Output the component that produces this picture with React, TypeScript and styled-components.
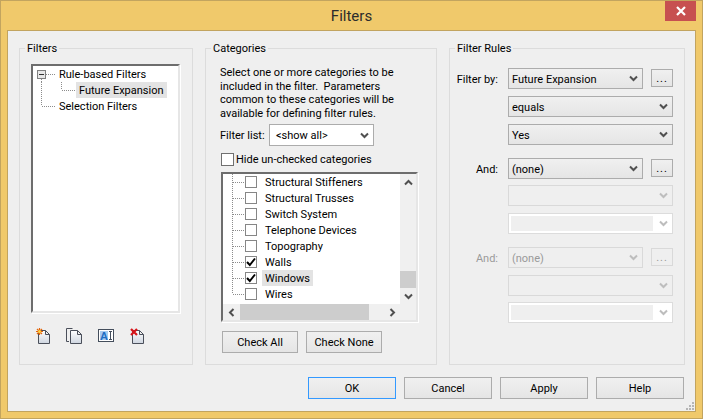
import styled, { createGlobalStyle } from 'styled-components';

const FONT = 'Roboto, "Noto Sans", sans-serif';

const GlobalStyle = createGlobalStyle`
  html, body {
    margin: 0;
    width: 703px;
    height: 419px;
    overflow: hidden;
    background: #f0c96b;
  }
  * { box-sizing: border-box; }
`;

const Window = styled.div`
  width: 703px;
  height: 419px;
  background: #f0c96b;
  border: 1px solid #c2a45f;
  padding: 0 6px 6px;
  display: flex;
  flex-direction: column;
  font-family: ${FONT};
  font-size: 11px;
  color: #000;
`;

const TitleBar = styled.div`
  position: relative;
  height: 29px;
  flex: none;
  display: flex;
  align-items: center;
  justify-content: center;
  font-size: 15px;
  color: #2c2c2c;
`;

const CloseButton = styled.div`
  position: absolute;
  top: 0;
  right: 0;
  width: 31px;
  height: 20px;
  background: #c75050;
  display: flex;
  align-items: center;
  justify-content: center;
`;

const Client = styled.div`
  position: relative;
  flex: 1;
  background: #efefef;
  border: 1px solid #c2a45f;
  padding: 10px 11px 0;
`;

const Groups = styled.div`
  display: grid;
  grid-template-columns: 174px 232px 236px;
  column-gap: 12px;
  height: 324px;
`;

const Group = styled.fieldset`
  margin: 0;
  min-width: 0;
  height: 324px;
  border: 1px solid #dcdcdc;
  padding: 0;
`;

const GroupTitle = styled.legend`
  margin-left: 5px;
  padding: 0 2px;
  height: 14px;
  line-height: 16px;
`;

const FiltersBody = styled.div`
  padding: 9px 0 0 11px;
`;

const TreeBox = styled.div`
  width: 149px;
  height: 249px;
  background: #fff;
  border-style: solid;
  border-width: 2px;
  border-color: #6d6d6d #e6e6e6 #e6e6e6 #6d6d6d;
  box-shadow: 1px 1px 0 #fff;
  padding: 0;
`;

const TreeRow = styled.div`
  height: 16px;
  display: flex;
  align-items: center;
  white-space: nowrap;
`;

const TreeLabel = styled.span<{ $selected?: boolean }>`
  height: 16px;
  line-height: 18px;
  padding: 0 3px;
  background: ${({ $selected }) => ($selected ? '#e3e3e3' : 'transparent')};
`;

const IconBar = styled.div`
  display: flex;
  align-items: center;
  gap: 16px;
  margin: 15px 0 0 5px;
`;

const CategoriesBody = styled.div`
  padding: 11px 0 0 14px;
`;

const Description = styled.div`
  line-height: 13.5px;
  white-space: nowrap;
`;

const FilterListRow = styled.div`
  display: flex;
  align-items: center;
  margin-top: 4px;
  white-space: nowrap;
`;

const FilterListLabel = styled.span`
  width: 49px;
  flex: none;
`;

const ListDropdown = styled.div`
  width: 105px;
  height: 22px;
  background: #fff;
  border: 1px solid #acacac;
  display: flex;
  align-items: center;
  justify-content: space-between;
  padding: 0 4px 0 6px;
`;

const HideRow = styled.div`
  display: flex;
  align-items: center;
  gap: 2px;
  margin: 7px 0 0 1px;
  height: 13px;
  white-space: nowrap;
`;

const CheckBox = styled.div<{ $size: number }>`
  width: ${({ $size }) => $size}px;
  height: ${({ $size }) => $size}px;
  flex: none;
  background: #fff;
  border: 1px solid ${({ $size }) => ($size > 12 ? '#707070' : '#868686')};
  display: flex;
  align-items: center;
  justify-content: center;
`;

const ListBox = styled.div`
  width: 197px;
  height: 150px;
  margin: 6px 0 0 1px;
  background: #fff;
  border-style: solid;
  border-width: 2px;
  border-color: #6d6d6d #e6e6e6 #e6e6e6 #6d6d6d;
  box-shadow: 1px 1px 0 #fff;
  display: grid;
  grid-template-columns: 1fr 16px;
  grid-template-rows: 130px 16px;
`;

const ListRows = styled.div`
  overflow: hidden;
`;

const ListRow = styled.div`
  height: 16px;
  display: flex;
  align-items: center;
  white-space: nowrap;
`;

const ListLabel = styled(TreeLabel)`
  margin-left: 5px;
`;

const VScroll = styled.div`
  background: #f0f0f0;
  display: flex;
  flex-direction: column;
`;

const HScroll = styled.div`
  background: #f0f0f0;
  display: flex;
`;

const Corner = styled.div`
  background: #f0f0f0;
`;

const ScrollArrow = styled.div`
  width: 16px;
  height: 16px;
  flex: none;
  display: flex;
  align-items: center;
  justify-content: center;
`;

const VTrack = styled.div`
  flex: 1;
  display: flex;
  align-items: flex-end;
`;

const VThumb = styled.div`
  width: 16px;
  height: 17px;
  background: #cdcdcd;
`;

const HTrack = styled.div`
  flex: 1;
`;

const HThumb = styled.div`
  width: 129px;
  height: 16px;
  margin-left: 1px;
  background: #cdcdcd;
`;

const CheckButtons = styled.div`
  display: flex;
  gap: 8px;
  margin: 9px 0 0 2px;
`;

const PushButton = styled.div<{ $width: number; $isDefault?: boolean }>`
  width: ${({ $width }) => $width}px;
  height: 22px;
  display: flex;
  align-items: center;
  justify-content: center;
  background: linear-gradient(#f0f0f0, #e5e5e5);
  border: 1px solid ${({ $isDefault }) => ($isDefault ? '#3399ff' : '#acacac')};
  white-space: nowrap;
`;

const RulesBody = styled.div`
  display: flex;
  flex-direction: column;
`;

const RuleRow = styled.div<{ $gap: number }>`
  display: flex;
  align-items: flex-start;
  height: 21px;
  margin-top: ${({ $gap }) => $gap}px;
`;

const RuleLabel = styled.div<{ $disabled?: boolean }>`
  width: 48px;
  margin-right: 10px;
  flex: none;
  height: 21px;
  line-height: 23px;
  text-align: right;
  white-space: nowrap;
  color: ${({ $disabled }) => ($disabled ? '#9a9a9a' : 'inherit')};
`;

const Combo = styled.div<{ $width: number; $disabled?: boolean }>`
  width: ${({ $width }) => $width}px;
  height: 21px;
  flex: none;
  display: flex;
  align-items: center;
  justify-content: space-between;
  padding: 2px 4px 0 3px;
  border: 1px solid ${({ $disabled }) => ($disabled ? '#d9d9d9' : '#acacac')};
  background: ${({ $disabled }) => ($disabled ? '#efefef' : 'linear-gradient(#f0f0f0, #e5e5e5)')};
  color: ${({ $disabled }) => ($disabled ? '#9a9a9a' : 'inherit')};
  white-space: nowrap;

  svg {
    margin-top: -2px;
  }
`;

const EditCombo = styled.div`
  width: 165px;
  height: 21px;
  flex: none;
  background: #fff;
  border: 1px solid #dcdcdc;
  padding: 2px 4px 2px 2px;
  display: flex;
  align-items: center;
  justify-content: space-between;
`;

const EditField = styled.div`
  width: 142px;
  height: 15px;
  background: #efefef;
`;

const MoreButton = styled.div<{ $disabled?: boolean }>`
  width: 22px;
  height: 18px;
  flex: none;
  margin: 1px 0 0 8px;
  display: flex;
  align-items: center;
  justify-content: center;
  letter-spacing: 1px;
  background: ${({ $disabled }) => ($disabled ? '#efefef' : 'linear-gradient(#f0f0f0, #e5e5e5)')};
  border: 1px solid ${({ $disabled }) => ($disabled ? '#d9d9d9' : '#acacac')};
  color: ${({ $disabled }) => ($disabled ? '#9a9a9a' : 'inherit')};
`;

const Footer = styled.div`
  display: flex;
  justify-content: flex-end;
  gap: 8px;
  margin-top: 12px;
`;

const SizeGrip = styled.svg`
  position: absolute;
  right: 0;
  bottom: 0;
`;

const TreeLines = styled.svg`
  flex: none;
`;

const Chevron = ({ color = '#505050', dir = 'down' }: { color?: string; dir?: 'down' | 'up' | 'left' | 'right' }) => {
  const rotate = { down: 0, up: 180, left: 90, right: -90 }[dir];
  return (
    <svg width="9" height="7" viewBox="0 0 9 7" style={{ transform: `rotate(${rotate}deg)`, flex: 'none' }}>
      <path d="M1 1.5 L4.5 5 L8 1.5" fill="none" stroke={color} strokeWidth="2" />
    </svg>
  );
};

const Connector = ({ last, width = 22, x = 9 }: { last?: boolean; width?: number; x?: number }) => (
  <TreeLines width={width} height="16" shapeRendering="crispEdges">
    <path
      d={`M${x + 0.5} 0 V${last ? 8 : 16} M${x + 0.5} 8.5 H${width - 1}`}
      fill="none"
      stroke="#8c8c8c"
      strokeDasharray="1 1"
    />
  </TreeLines>
);

const Tick = () => (
  <svg width="10" height="10" viewBox="0 0 10 10">
    <path d="M1 5 L3.8 8 L9 1.5" fill="none" stroke="#000" strokeWidth="2" />
  </svg>
);

const PageShape = ({ x = 0, y = 0 }: { x?: number; y?: number }) => (
  <path
    transform={`translate(${x} ${y})`}
    d="M.5.5 H7.5 L11.5 4.5 V13.5 H.5 Z M7.5.5 V4.5 H11.5"
    fill="url(#pageFill)"
    stroke="#4a4f5a"
  />
);

const PageGradient = () => (
  <defs>
    <linearGradient id="pageFill" x1="0" y1="0" x2="0" y2="1">
      <stop offset="0" stopColor="#ffffff" />
      <stop offset="1" stopColor="#cfd6e0" />
    </linearGradient>
  </defs>
);

const NewIcon = () => (
  <svg width="14" height="16" viewBox="0 0 14 16">
    <PageGradient />
    <PageShape x={2} y={2} />
    <path d="M3.5 0 V7 M0 3.5 H7 M1 1 L6 6 M6 1 L1 6" stroke="#e2660c" strokeWidth="1.2" />
    <circle cx="3.5" cy="3.5" r="1.5" fill="#ffd23c" />
  </svg>
);

const CopyIcon = () => (
  <svg width="16" height="16" viewBox="0 0 16 16">
    <PageGradient />
    <path d="M6.5 .5 H.5 V13.5 H3" fill="none" stroke="#4a4f5a" />
    <PageShape x={4} y={2} />
  </svg>
);

const RenameIcon = () => (
  <svg width="16" height="14" viewBox="0 0 16 14">
    <rect x=".5" y=".5" width="15" height="12" fill="#fff" stroke="#444e5c" />
    <rect x="2" y="2" width="8" height="9" fill="#a9cdf0" />
    <text x="6" y="10.5" textAnchor="middle" fontSize="11" fontWeight="700" fontFamily="Liberation Sans, sans-serif" fill="#1f6fc4">
      A
    </text>
    <path d="M11 2.5 H14 M12.5 2.5 V10.5 M11 10.5 H14" stroke="#444e5c" fill="none" />
  </svg>
);

const DeleteIcon = () => (
  <svg width="14" height="16" viewBox="0 0 14 16">
    <PageGradient />
    <PageShape x={2} y={2} />
    <path d="M1 1 L7 7 M7 1 L1 7" stroke="#d6141a" strokeWidth="2.2" />
  </svg>
);

const categories = [
  { name: 'Structural Stiffeners' },
  { name: 'Structural Trusses' },
  { name: 'Switch System' },
  { name: 'Telephone Devices' },
  { name: 'Topography' },
  { name: 'Walls', checked: true },
  { name: 'Windows', checked: true, selected: true },
  { name: 'Wires', last: true },
];

export default function App() {
  return (
    <>
      <GlobalStyle />
      <Window>
        <TitleBar>
          Filters
          <CloseButton>
            <svg width="10" height="10" viewBox="0 0 10 10">
              <path d="M1 1 L9 9 M9 1 L1 9" stroke="#fff" strokeWidth="2.2" />
            </svg>
          </CloseButton>
        </TitleBar>
        <Client>
          <Groups>
            <Group>
              <GroupTitle>Filters</GroupTitle>
              <FiltersBody>
                <TreeBox>
                  <TreeRow>
                    <TreeLines width="23" height="16" shapeRendering="crispEdges">
                      <path d="M8.5 13 V16 M13 8.5 H23" fill="none" stroke="#8c8c8c" strokeDasharray="1 1" />
                      <rect x="4.5" y="4.5" width="8" height="8" fill="#e8e8e8" stroke="#808080" />
                      <path d="M6 8.5 H11" stroke="#333" />
                    </TreeLines>
                    <TreeLabel>Rule-based Filters</TreeLabel>
                  </TreeRow>
                  <TreeRow>
                    <TreeLines width="43" height="16" shapeRendering="crispEdges">
                      <path d="M8.5 0 V16 M28.5 0 V8 M28.5 8.5 H42" fill="none" stroke="#8c8c8c" strokeDasharray="1 1" />
                    </TreeLines>
                    <TreeLabel $selected>Future Expansion</TreeLabel>
                  </TreeRow>
                  <TreeRow>
                    <TreeLines width="23" height="16" shapeRendering="crispEdges">
                      <path d="M8.5 0 V8 M8.5 8.5 H23" fill="none" stroke="#8c8c8c" strokeDasharray="1 1" />
                    </TreeLines>
                    <TreeLabel>Selection Filters</TreeLabel>
                  </TreeRow>
                </TreeBox>
                <IconBar>
                  <NewIcon />
                  <CopyIcon />
                  <RenameIcon />
                  <DeleteIcon />
                </IconBar>
              </FiltersBody>
            </Group>

            <Group>
              <GroupTitle>Categories</GroupTitle>
              <CategoriesBody>
                <Description>
                  Select one or more categories to be
                  <br />
                  included in the filter.&nbsp; Parameters
                  <br />
                  common to these categories will be
                  <br />
                  available for defining filter rules.
                </Description>
                <FilterListRow>
                  <FilterListLabel>Filter list:</FilterListLabel>
                  <ListDropdown>
                    &lt;show all&gt;
                    <Chevron />
                  </ListDropdown>
                </FilterListRow>
                <HideRow>
                  <CheckBox $size={13} />
                  Hide un-checked categories
                </HideRow>
                <ListBox>
                  <ListRows>
                    {categories.map((c) => (
                      <ListRow key={c.name}>
                        <Connector last={c.last} />
                        <CheckBox $size={12}>{c.checked && <Tick />}</CheckBox>
                        <ListLabel $selected={c.selected}>{c.name}</ListLabel>
                      </ListRow>
                    ))}
                  </ListRows>
                  <VScroll>
                    <ScrollArrow>
                      <Chevron dir="up" />
                    </ScrollArrow>
                    <VTrack>
                      <VThumb />
                    </VTrack>
                    <ScrollArrow>
                      <Chevron />
                    </ScrollArrow>
                  </VScroll>
                  <HScroll>
                    <ScrollArrow>
                      <Chevron dir="left" />
                    </ScrollArrow>
                    <HTrack>
                      <HThumb />
                    </HTrack>
                    <ScrollArrow>
                      <Chevron dir="right" />
                    </ScrollArrow>
                  </HScroll>
                  <Corner />
                </ListBox>
                <CheckButtons>
                  <PushButton $width={76}>Check All</PushButton>
                  <PushButton $width={76}>Check None</PushButton>
                </CheckButtons>
              </CategoriesBody>
            </Group>

            <Group>
              <GroupTitle>Filter Rules</GroupTitle>
              <RulesBody>
                <RuleRow $gap={13}>
                  <RuleLabel>Filter by:</RuleLabel>
                  <Combo $width={135}>
                    Future Expansion
                    <Chevron />
                  </Combo>
                  <MoreButton>...</MoreButton>
                </RuleRow>
                <RuleRow $gap={7}>
                  <RuleLabel />
                  <Combo $width={165}>
                    equals
                    <Chevron />
                  </Combo>
                </RuleRow>
                <RuleRow $gap={7}>
                  <RuleLabel />
                  <Combo $width={165}>
                    Yes
                    <Chevron />
                  </Combo>
                </RuleRow>
                <RuleRow $gap={13}>
                  <RuleLabel>And:</RuleLabel>
                  <Combo $width={135}>
                    (none)
                    <Chevron />
                  </Combo>
                  <MoreButton>...</MoreButton>
                </RuleRow>
                <RuleRow $gap={6}>
                  <RuleLabel />
                  <Combo $width={165} $disabled>
                    <span />
                    <Chevron color="#bdbdbd" />
                  </Combo>
                </RuleRow>
                <RuleRow $gap={7}>
                  <RuleLabel />
                  <EditCombo>
                    <EditField />
                    <Chevron color="#bdbdbd" />
                  </EditCombo>
                </RuleRow>
                <RuleRow $gap={13}>
                  <RuleLabel $disabled>And:</RuleLabel>
                  <Combo $width={135} $disabled>
                    (none)
                    <Chevron color="#bdbdbd" />
                  </Combo>
                  <MoreButton $disabled>...</MoreButton>
                </RuleRow>
                <RuleRow $gap={7}>
                  <RuleLabel />
                  <Combo $width={165} $disabled>
                    <span />
                    <Chevron color="#bdbdbd" />
                  </Combo>
                </RuleRow>
                <RuleRow $gap={6}>
                  <RuleLabel />
                  <EditCombo>
                    <EditField />
                    <Chevron color="#bdbdbd" />
                  </EditCombo>
                </RuleRow>
              </RulesBody>
            </Group>
          </Groups>
          <Footer>
            <PushButton $width={88} $isDefault>OK</PushButton>
            <PushButton $width={88}>Cancel</PushButton>
            <PushButton $width={88}>Apply</PushButton>
            <PushButton $width={88}>Help</PushButton>
          </Footer>
          <SizeGrip width="10" height="10" viewBox="0 0 10 10" shapeRendering="crispEdges">
            <path d="M7 1h2v2h-2z M4 4h2v2h-2z M7 4h2v2h-2z M1 7h2v2h-2z M4 7h2v2h-2z M7 7h2v2h-2z" fill="#b5b5b5" />
          </SizeGrip>
        </Client>
      </Window>
    </>
  );
}
